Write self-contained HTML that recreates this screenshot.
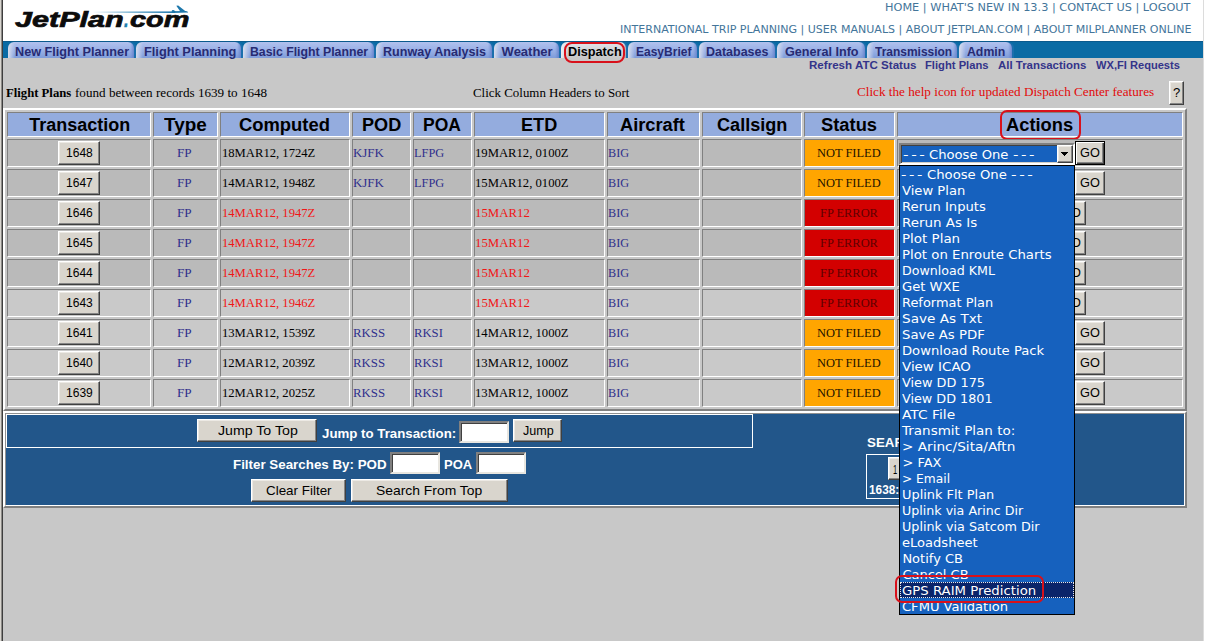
<!DOCTYPE html>
<html lang="en"><head><meta charset="utf-8"><title>JetPlan.com - Dispatch</title>
<style>
html,body{margin:0;padding:0}body{width:1205px;height:644px;overflow:hidden;background:#fff;position:relative}
.b{position:absolute;box-sizing:border-box}
.t{position:absolute;white-space:pre;line-height:1.2;transform-origin:0 0}

.cell{border:1px solid;border-color:#808080 #fff #fff #808080}
.btn{background:#d9d5cd;border:1px solid;border-color:#fff #404040 #404040 #fff;box-shadow:inset -1px -1px 0 #858585, inset 1px 1px 0 #ece9e4}
.btnd{background:#d9d5cd;border:1px solid #000;box-shadow:inset 1px 1px 0 #fff, inset -1px -1px 0 #404040, inset -2px -2px 0 #858585}
.inp{background:#fff;border:2px solid;border-color:#808080 #e8e6e0 #e8e6e0 #808080;box-shadow:inset 1px 1px 0 #404040}
.tab{border-radius:6px 6px 0 0;background:linear-gradient(90deg,rgba(218,223,236,.95) 0,rgba(218,223,236,.7) 2px,rgba(218,223,236,0) 7px),linear-gradient(270deg,rgba(95,125,200,.8) 0,rgba(95,125,200,.35) 2px,rgba(95,125,200,0) 4px),linear-gradient(#b1c1ee 0%,#9cb2e7 45%,#7f9dda 100%);box-shadow:2px 0 0 #1b6fad}
.tabsel{border-radius:6px 6px 0 0;background:linear-gradient(90deg,rgba(240,241,245,.95) 0,rgba(240,241,245,0) 6px),linear-gradient(270deg,rgba(120,130,160,.5) 0,rgba(120,130,160,0) 3px),linear-gradient(#e2e4ec 0%,#d3d4d9 50%,#c8c8c8 100%);box-shadow:2px 0 0 #1b6fad}
.ann{border:2px solid #d8111b;border-radius:7px;background:transparent}
</style></head>
<body>
<div class="b" style="left:0px;top:0px;width:1205px;height:644px;background:#fff;"></div>
<div class="b" style="left:3px;top:0px;width:1200px;height:641px;background:#c8c8c8;"></div>
<div class="b" style="left:1203px;top:0px;width:1px;height:641px;background:#dcdcdc;"></div>
<div class="b" style="left:3px;top:0px;width:1200px;height:41px;background:#fff;"></div>
<div class="b" style="left:0px;top:0px;width:1px;height:641px;background:#d8d5cf;"></div>
<div class="b" style="left:1px;top:0px;width:1px;height:641px;background:#8c8a87;"></div>
<div class="b" style="left:2px;top:0px;width:1px;height:641px;background:#3e3e3e;"></div>
<div class="b" style="left:3px;top:41px;width:1200px;height:17px;background:#0a6ba4;border-top:1px solid #0a5a8d;"></div>
<span class="t" style="left:15.00px;top:6.50px;font-family:'Liberation Sans', Arial, sans-serif;font-size:21.6px;color:#0c0c0c;font-weight:bold;font-style:italic;-webkit-text-stroke:0.7px #0c0c0c;transform:scaleX(1.4145);">JetPlan</span>
<span class="t" style="left:124.20px;top:6.50px;font-family:'Liberation Sans', Arial, sans-serif;font-size:21.6px;color:#1c7fb0;font-weight:bold;font-style:italic;-webkit-text-stroke:0.5px #1c7fb0;transform:scaleX(0.7600);">.</span>
<span class="t" style="left:130.20px;top:6.50px;font-family:'Liberation Sans', Arial, sans-serif;font-size:21.6px;color:#0c0c0c;font-weight:bold;font-style:italic;-webkit-text-stroke:0.7px #0c0c0c;transform:scaleX(1.3364);">com</span>
<svg class="b" style="left:90px;top:2px;width:104px;height:14px" viewBox="0 0 104 14"><defs><linearGradient id="lg" x1="0" x2="1"><stop offset="0" stop-color="#2a86b8" stop-opacity="0"/><stop offset="0.45" stop-color="#2a86b8" stop-opacity=".55"/><stop offset="1" stop-color="#1d77ab"/></linearGradient></defs><rect x="3" y="9.4" width="82" height="1.6" fill="url(#lg)"/><path d="M81.5 9.2 L96 9.0 Q98.5 9.8 98.2 10.6 L82 11.0 Z M86.3 3.8 L88.2 3.6 L95.5 9.3 L90.3 9.5 Z M81.7 8.3 L83.5 8.1 L85.5 9.3 L82.5 9.4 Z" fill="#1d77ab"/></svg>
<span class="t" style="left:884.83px;top:1.90px;font-family:'DejaVu Sans', Verdana, sans-serif;font-size:9.7px;color:#43759a;transform:scaleX(1.1655);">HOME | WHAT&#x27;S NEW IN 13.3 | CONTACT US | LOGOUT</span>
<span class="t" style="left:619.86px;top:23.80px;font-family:'DejaVu Sans', Verdana, sans-serif;font-size:9.7px;color:#43759a;transform:scaleX(1.1392);">INTERNATIONAL TRIP PLANNING | USER MANUALS | ABOUT JETPLAN.COM | ABOUT MILPLANNER ONLINE</span>
<div class="b tab" style="left:8px;top:42px;width:126px;height:16px"></div>
<span class="t" style="left:14.72px;top:43.50px;font-family:'Liberation Sans', Arial, sans-serif;font-size:13px;color:#272b72;font-weight:bold;transform:scaleX(0.9750);">New Flight Planner</span>
<div class="b tab" style="left:136px;top:42px;width:105px;height:16px"></div>
<span class="t" style="left:143.52px;top:43.50px;font-family:'Liberation Sans', Arial, sans-serif;font-size:13px;color:#272b72;font-weight:bold;transform:scaleX(0.9837);">Flight Planning</span>
<div class="b tab" style="left:243px;top:42px;width:131px;height:16px"></div>
<span class="t" style="left:249.76px;top:43.50px;font-family:'Liberation Sans', Arial, sans-serif;font-size:13px;color:#272b72;font-weight:bold;transform:scaleX(0.9444);">Basic Flight Planner</span>
<div class="b tab" style="left:376px;top:42px;width:116px;height:16px"></div>
<span class="t" style="left:383.33px;top:43.50px;font-family:'Liberation Sans', Arial, sans-serif;font-size:13px;color:#272b72;font-weight:bold;transform:scaleX(0.9667);">Runway Analysis</span>
<div class="b tab" style="left:494px;top:42px;width:65px;height:16px"></div>
<span class="t" style="left:501.60px;top:43.50px;font-family:'Liberation Sans', Arial, sans-serif;font-size:13px;color:#272b72;font-weight:bold;">Weather</span>
<div class="b tabsel" style="left:561px;top:42px;width:65px;height:16px"></div>
<span class="t" style="left:567.72px;top:43.50px;font-family:'Liberation Sans', Arial, sans-serif;font-size:13px;color:#000;font-weight:bold;transform:scaleX(0.9774);">Dispatch</span>
<div class="b tab" style="left:628px;top:42px;width:69px;height:16px"></div>
<span class="t" style="left:635.58px;top:43.50px;font-family:'Liberation Sans', Arial, sans-serif;font-size:13px;color:#272b72;font-weight:bold;transform:scaleX(0.9237);">EasyBrief</span>
<div class="b tab" style="left:699px;top:42px;width:76px;height:16px"></div>
<span class="t" style="left:706.04px;top:43.50px;font-family:'Liberation Sans', Arial, sans-serif;font-size:13px;color:#272b72;font-weight:bold;transform:scaleX(0.9594);">Databases</span>
<div class="b tab" style="left:777px;top:42px;width:88px;height:16px"></div>
<span class="t" style="left:784.60px;top:43.50px;font-family:'Liberation Sans', Arial, sans-serif;font-size:13px;color:#272b72;font-weight:bold;transform:scaleX(0.9697);">General Info</span>
<div class="b tab" style="left:867px;top:42px;width:90px;height:16px"></div>
<span class="t" style="left:874.60px;top:43.50px;font-family:'Liberation Sans', Arial, sans-serif;font-size:13px;color:#272b72;font-weight:bold;transform:scaleX(0.9205);">Transmission</span>
<div class="b tab" style="left:959px;top:42px;width:53px;height:16px"></div>
<span class="t" style="left:967.30px;top:43.50px;font-family:'Liberation Sans', Arial, sans-serif;font-size:13px;color:#272b72;font-weight:bold;transform:scaleX(0.9450);">Admin</span>
<div class="b ann" style="left:564px;top:42px;width:61px;height:21px;border-radius:8px"></div>
<span class="t" style="left:808.95px;top:59.00px;font-family:'Liberation Sans', Arial, sans-serif;font-size:11px;color:#34348a;font-weight:bold;transform:scaleX(1.0525);">Refresh ATC Status</span>
<span class="t" style="left:925.48px;top:59.00px;font-family:'Liberation Sans', Arial, sans-serif;font-size:11px;color:#34348a;font-weight:bold;transform:scaleX(1.0197);">Flight Plans</span>
<span class="t" style="left:998.40px;top:59.00px;font-family:'Liberation Sans', Arial, sans-serif;font-size:11px;color:#34348a;font-weight:bold;transform:scaleX(1.0388);">All Transactions</span>
<span class="t" style="left:1096.40px;top:59.00px;font-family:'Liberation Sans', Arial, sans-serif;font-size:11px;color:#34348a;font-weight:bold;transform:scaleX(1.0096);">WX,FI Requests</span>
<span class="t" style="left:6.00px;top:84.50px;font-family:'Liberation Serif', 'Times New Roman', serif;font-size:13px;color:#000;font-weight:bold;transform:scaleX(0.9761);">Flight Plans</span>
<span class="t" style="left:74.69px;top:84.50px;font-family:'Liberation Serif', 'Times New Roman', serif;font-size:13px;color:#000;transform:scaleX(1.0101);">found between records 1639 to 1648</span>
<span class="t" style="left:473.20px;top:84.50px;font-family:'Liberation Serif', 'Times New Roman', serif;font-size:13px;color:#000;transform:scaleX(0.9936);">Click Column Headers to Sort</span>
<span class="t" style="left:857.00px;top:84.30px;font-family:'Liberation Serif', 'Times New Roman', serif;font-size:13px;color:#e20a0a;transform:scaleX(1.0137);">Click the help icon for updated Dispatch Center features</span>
<div class="b btn" style="left:1169px;top:81px;width:15px;height:24px"></div>
<span class="t" style="left:1172.63px;top:84.80px;font-family:'Liberation Sans', Arial, sans-serif;font-size:13.5px;color:#000;transform:scaleX(0.9667);">?</span>
<div class="b" style="left:3px;top:108px;width:1184px;height:303px;border:2px solid;border-color:#fff #808080 #808080 #fff;"></div>
<div class="b cell" style="left:7px;top:112px;width:144px;height:25px;background:#94acde"></div>
<span class="t" style="left:29.20px;top:114.70px;font-family:'Liberation Sans', Arial, sans-serif;font-size:18px;color:#000;font-weight:bold;">Transaction</span>
<div class="b cell" style="left:153px;top:112px;width:65px;height:25px;background:#94acde"></div>
<span class="t" style="left:164.00px;top:114.70px;font-family:'Liberation Sans', Arial, sans-serif;font-size:18px;color:#000;font-weight:bold;transform:scaleX(1.0500);">Type</span>
<div class="b cell" style="left:220px;top:112px;width:130px;height:25px;background:#94acde"></div>
<span class="t" style="left:238.68px;top:114.70px;font-family:'Liberation Sans', Arial, sans-serif;font-size:18px;color:#000;font-weight:bold;transform:scaleX(1.0218);">Computed</span>
<div class="b cell" style="left:352px;top:112px;width:59px;height:25px;background:#94acde"></div>
<span class="t" style="left:362.19px;top:114.70px;font-family:'Liberation Sans', Arial, sans-serif;font-size:18px;color:#000;font-weight:bold;transform:scaleX(1.0054);">POD</span>
<div class="b cell" style="left:413px;top:112px;width:59px;height:25px;background:#94acde"></div>
<span class="t" style="left:422.93px;top:114.70px;font-family:'Liberation Sans', Arial, sans-serif;font-size:18px;color:#000;font-weight:bold;transform:scaleX(0.9711);">POA</span>
<div class="b cell" style="left:474px;top:112px;width:131px;height:25px;background:#94acde"></div>
<span class="t" style="left:520.99px;top:114.70px;font-family:'Liberation Sans', Arial, sans-serif;font-size:18px;color:#000;font-weight:bold;transform:scaleX(1.0059);">ETD</span>
<div class="b cell" style="left:607px;top:112px;width:93px;height:25px;background:#94acde"></div>
<span class="t" style="left:620.39px;top:114.70px;font-family:'Liberation Sans', Arial, sans-serif;font-size:18px;color:#000;font-weight:bold;transform:scaleX(1.0143);">Aircraft</span>
<div class="b cell" style="left:702px;top:112px;width:100px;height:25px;background:#94acde"></div>
<span class="t" style="left:716.89px;top:114.70px;font-family:'Liberation Sans', Arial, sans-serif;font-size:18px;color:#000;font-weight:bold;transform:scaleX(1.0059);">Callsign</span>
<div class="b cell" style="left:804px;top:112px;width:91px;height:25px;background:#94acde"></div>
<span class="t" style="left:821.28px;top:114.70px;font-family:'Liberation Sans', Arial, sans-serif;font-size:18px;color:#000;font-weight:bold;transform:scaleX(1.0189);">Status</span>
<div class="b cell" style="left:897px;top:112px;width:286px;height:25px;background:#94acde"></div>
<span class="t" style="left:1006.48px;top:114.70px;font-family:'Liberation Sans', Arial, sans-serif;font-size:18px;color:#000;font-weight:bold;transform:scaleX(1.0172);">Actions</span>
<div class="b ann" style="left:1000px;top:110px;width:81px;height:30px"></div>
<div class="b cell" style="left:7px;top:139px;width:144px;height:28px;background:#bababa"></div>
<div class="b cell" style="left:153px;top:139px;width:65px;height:28px;background:#bababa"></div>
<div class="b cell" style="left:220px;top:139px;width:130px;height:28px;background:#bababa"></div>
<div class="b cell" style="left:352px;top:139px;width:59px;height:28px;background:#bababa"></div>
<div class="b cell" style="left:413px;top:139px;width:59px;height:28px;background:#bababa"></div>
<div class="b cell" style="left:474px;top:139px;width:131px;height:28px;background:#bababa"></div>
<div class="b cell" style="left:607px;top:139px;width:93px;height:28px;background:#bababa"></div>
<div class="b cell" style="left:702px;top:139px;width:100px;height:28px;background:#bababa"></div>
<div class="b cell" style="left:804px;top:139px;width:91px;height:28px;background:#ffa500"></div>
<div class="b cell" style="left:897px;top:139px;width:286px;height:28px;background:#bababa"></div>
<div class="b btn" style="left:58px;top:141px;width:42px;height:24px"></div>
<span class="t" style="left:65.67px;top:145.20px;font-family:'Liberation Sans', Arial, sans-serif;font-size:13px;color:#000;transform:scaleX(0.9250);">1648</span>
<span class="t" style="left:177.38px;top:145.00px;font-family:'Liberation Serif', 'Times New Roman', serif;font-size:13px;color:#2f2f8c;transform:scaleX(1.0154);">FP</span>
<span class="t" style="left:221.76px;top:145.00px;font-family:'Liberation Serif', 'Times New Roman', serif;font-size:13px;color:#000;transform:scaleX(0.9710);">18MAR12, 1724Z</span>
<span class="t" style="left:352.90px;top:145.00px;font-family:'Liberation Serif', 'Times New Roman', serif;font-size:13px;color:#2f2f8c;">KJFK</span>
<span class="t" style="left:414.35px;top:145.00px;font-family:'Liberation Serif', 'Times New Roman', serif;font-size:13px;color:#2f2f8c;transform:scaleX(0.9500);">LFPG</span>
<span class="t" style="left:475.25px;top:145.00px;font-family:'Liberation Serif', 'Times New Roman', serif;font-size:13px;color:#000;transform:scaleX(0.9742);">19MAR12, 0100Z</span>
<span class="t" style="left:608.26px;top:145.00px;font-family:'Liberation Serif', 'Times New Roman', serif;font-size:13px;color:#2f2f8c;transform:scaleX(0.9381);">BIG</span>
<span class="t" style="left:817.24px;top:145.00px;font-family:'Liberation Serif', 'Times New Roman', serif;font-size:13px;color:#1c1200;transform:scaleX(0.9569);">NOT FILED</span>
<div class="b cell" style="left:7px;top:169px;width:144px;height:28px;background:#bababa"></div>
<div class="b cell" style="left:153px;top:169px;width:65px;height:28px;background:#bababa"></div>
<div class="b cell" style="left:220px;top:169px;width:130px;height:28px;background:#bababa"></div>
<div class="b cell" style="left:352px;top:169px;width:59px;height:28px;background:#bababa"></div>
<div class="b cell" style="left:413px;top:169px;width:59px;height:28px;background:#bababa"></div>
<div class="b cell" style="left:474px;top:169px;width:131px;height:28px;background:#bababa"></div>
<div class="b cell" style="left:607px;top:169px;width:93px;height:28px;background:#bababa"></div>
<div class="b cell" style="left:702px;top:169px;width:100px;height:28px;background:#bababa"></div>
<div class="b cell" style="left:804px;top:169px;width:91px;height:28px;background:#ffa500"></div>
<div class="b cell" style="left:897px;top:169px;width:286px;height:28px;background:#bababa"></div>
<div class="b btn" style="left:58px;top:171px;width:42px;height:24px"></div>
<span class="t" style="left:65.67px;top:175.20px;font-family:'Liberation Sans', Arial, sans-serif;font-size:13px;color:#000;transform:scaleX(0.9250);">1647</span>
<span class="t" style="left:177.38px;top:175.00px;font-family:'Liberation Serif', 'Times New Roman', serif;font-size:13px;color:#2f2f8c;transform:scaleX(1.0154);">FP</span>
<span class="t" style="left:221.76px;top:175.00px;font-family:'Liberation Serif', 'Times New Roman', serif;font-size:13px;color:#000;transform:scaleX(0.9710);">14MAR12, 1948Z</span>
<span class="t" style="left:352.90px;top:175.00px;font-family:'Liberation Serif', 'Times New Roman', serif;font-size:13px;color:#2f2f8c;">KJFK</span>
<span class="t" style="left:414.35px;top:175.00px;font-family:'Liberation Serif', 'Times New Roman', serif;font-size:13px;color:#2f2f8c;transform:scaleX(0.9500);">LFPG</span>
<span class="t" style="left:475.25px;top:175.00px;font-family:'Liberation Serif', 'Times New Roman', serif;font-size:13px;color:#000;transform:scaleX(0.9742);">15MAR12, 0100Z</span>
<span class="t" style="left:608.26px;top:175.00px;font-family:'Liberation Serif', 'Times New Roman', serif;font-size:13px;color:#2f2f8c;transform:scaleX(0.9381);">BIG</span>
<span class="t" style="left:817.24px;top:175.00px;font-family:'Liberation Serif', 'Times New Roman', serif;font-size:13px;color:#1c1200;transform:scaleX(0.9569);">NOT FILED</span>
<div class="b inp" style="left:899px;top:173px;width:176px;height:22px"></div>
<div class="b btn" style="left:1075px;top:171px;width:30px;height:24px"></div>
<span class="t" style="left:1079.72px;top:174.70px;font-family:'Liberation Sans', Arial, sans-serif;font-size:13px;color:#000;transform:scaleX(0.9789);">GO</span>
<div class="b cell" style="left:7px;top:199px;width:144px;height:28px;background:#bababa"></div>
<div class="b cell" style="left:153px;top:199px;width:65px;height:28px;background:#bababa"></div>
<div class="b cell" style="left:220px;top:199px;width:130px;height:28px;background:#bababa"></div>
<div class="b cell" style="left:352px;top:199px;width:59px;height:28px;background:#bababa"></div>
<div class="b cell" style="left:413px;top:199px;width:59px;height:28px;background:#bababa"></div>
<div class="b cell" style="left:474px;top:199px;width:131px;height:28px;background:#bababa"></div>
<div class="b cell" style="left:607px;top:199px;width:93px;height:28px;background:#bababa"></div>
<div class="b cell" style="left:702px;top:199px;width:100px;height:28px;background:#bababa"></div>
<div class="b cell" style="left:804px;top:199px;width:91px;height:28px;background:#d30000"></div>
<div class="b cell" style="left:897px;top:199px;width:286px;height:28px;background:#bababa"></div>
<div class="b btn" style="left:58px;top:201px;width:42px;height:24px"></div>
<span class="t" style="left:65.67px;top:205.20px;font-family:'Liberation Sans', Arial, sans-serif;font-size:13px;color:#000;transform:scaleX(0.9250);">1646</span>
<span class="t" style="left:177.38px;top:205.00px;font-family:'Liberation Serif', 'Times New Roman', serif;font-size:13px;color:#2f2f8c;transform:scaleX(1.0154);">FP</span>
<span class="t" style="left:221.76px;top:205.00px;font-family:'Liberation Serif', 'Times New Roman', serif;font-size:13px;color:#f01616;transform:scaleX(0.9710);">14MAR12, 1947Z</span>
<span class="t" style="left:475.23px;top:205.00px;font-family:'Liberation Serif', 'Times New Roman', serif;font-size:13px;color:#f01616;transform:scaleX(0.9868);">15MAR12</span>
<span class="t" style="left:608.26px;top:205.00px;font-family:'Liberation Serif', 'Times New Roman', serif;font-size:13px;color:#2f2f8c;transform:scaleX(0.9381);">BIG</span>
<span class="t" style="left:820.24px;top:205.00px;font-family:'Liberation Serif', 'Times New Roman', serif;font-size:13px;color:#5e0000;transform:scaleX(0.9559);">FP ERROR</span>
<div class="b inp" style="left:899px;top:203px;width:157px;height:22px"></div>
<div class="b btn" style="left:1056px;top:201px;width:30px;height:24px"></div>
<span class="t" style="left:1060.72px;top:204.70px;font-family:'Liberation Sans', Arial, sans-serif;font-size:13px;color:#000;transform:scaleX(0.9789);">GO</span>
<div class="b cell" style="left:7px;top:229px;width:144px;height:28px;background:#bababa"></div>
<div class="b cell" style="left:153px;top:229px;width:65px;height:28px;background:#bababa"></div>
<div class="b cell" style="left:220px;top:229px;width:130px;height:28px;background:#bababa"></div>
<div class="b cell" style="left:352px;top:229px;width:59px;height:28px;background:#bababa"></div>
<div class="b cell" style="left:413px;top:229px;width:59px;height:28px;background:#bababa"></div>
<div class="b cell" style="left:474px;top:229px;width:131px;height:28px;background:#bababa"></div>
<div class="b cell" style="left:607px;top:229px;width:93px;height:28px;background:#bababa"></div>
<div class="b cell" style="left:702px;top:229px;width:100px;height:28px;background:#bababa"></div>
<div class="b cell" style="left:804px;top:229px;width:91px;height:28px;background:#d30000"></div>
<div class="b cell" style="left:897px;top:229px;width:286px;height:28px;background:#bababa"></div>
<div class="b btn" style="left:58px;top:231px;width:42px;height:24px"></div>
<span class="t" style="left:65.67px;top:235.20px;font-family:'Liberation Sans', Arial, sans-serif;font-size:13px;color:#000;transform:scaleX(0.9250);">1645</span>
<span class="t" style="left:177.38px;top:235.00px;font-family:'Liberation Serif', 'Times New Roman', serif;font-size:13px;color:#2f2f8c;transform:scaleX(1.0154);">FP</span>
<span class="t" style="left:221.76px;top:235.00px;font-family:'Liberation Serif', 'Times New Roman', serif;font-size:13px;color:#f01616;transform:scaleX(0.9710);">14MAR12, 1947Z</span>
<span class="t" style="left:475.23px;top:235.00px;font-family:'Liberation Serif', 'Times New Roman', serif;font-size:13px;color:#f01616;transform:scaleX(0.9868);">15MAR12</span>
<span class="t" style="left:608.26px;top:235.00px;font-family:'Liberation Serif', 'Times New Roman', serif;font-size:13px;color:#2f2f8c;transform:scaleX(0.9381);">BIG</span>
<span class="t" style="left:820.24px;top:235.00px;font-family:'Liberation Serif', 'Times New Roman', serif;font-size:13px;color:#5e0000;transform:scaleX(0.9559);">FP ERROR</span>
<div class="b inp" style="left:899px;top:233px;width:157px;height:22px"></div>
<div class="b btn" style="left:1056px;top:231px;width:30px;height:24px"></div>
<span class="t" style="left:1060.72px;top:234.70px;font-family:'Liberation Sans', Arial, sans-serif;font-size:13px;color:#000;transform:scaleX(0.9789);">GO</span>
<div class="b cell" style="left:7px;top:259px;width:144px;height:28px;background:#bababa"></div>
<div class="b cell" style="left:153px;top:259px;width:65px;height:28px;background:#bababa"></div>
<div class="b cell" style="left:220px;top:259px;width:130px;height:28px;background:#bababa"></div>
<div class="b cell" style="left:352px;top:259px;width:59px;height:28px;background:#bababa"></div>
<div class="b cell" style="left:413px;top:259px;width:59px;height:28px;background:#bababa"></div>
<div class="b cell" style="left:474px;top:259px;width:131px;height:28px;background:#bababa"></div>
<div class="b cell" style="left:607px;top:259px;width:93px;height:28px;background:#bababa"></div>
<div class="b cell" style="left:702px;top:259px;width:100px;height:28px;background:#bababa"></div>
<div class="b cell" style="left:804px;top:259px;width:91px;height:28px;background:#d30000"></div>
<div class="b cell" style="left:897px;top:259px;width:286px;height:28px;background:#bababa"></div>
<div class="b btn" style="left:58px;top:261px;width:42px;height:24px"></div>
<span class="t" style="left:65.67px;top:265.20px;font-family:'Liberation Sans', Arial, sans-serif;font-size:13px;color:#000;transform:scaleX(0.9250);">1644</span>
<span class="t" style="left:177.38px;top:265.00px;font-family:'Liberation Serif', 'Times New Roman', serif;font-size:13px;color:#2f2f8c;transform:scaleX(1.0154);">FP</span>
<span class="t" style="left:221.76px;top:265.00px;font-family:'Liberation Serif', 'Times New Roman', serif;font-size:13px;color:#f01616;transform:scaleX(0.9710);">14MAR12, 1947Z</span>
<span class="t" style="left:475.23px;top:265.00px;font-family:'Liberation Serif', 'Times New Roman', serif;font-size:13px;color:#f01616;transform:scaleX(0.9868);">15MAR12</span>
<span class="t" style="left:608.26px;top:265.00px;font-family:'Liberation Serif', 'Times New Roman', serif;font-size:13px;color:#2f2f8c;transform:scaleX(0.9381);">BIG</span>
<span class="t" style="left:820.24px;top:265.00px;font-family:'Liberation Serif', 'Times New Roman', serif;font-size:13px;color:#5e0000;transform:scaleX(0.9559);">FP ERROR</span>
<div class="b inp" style="left:899px;top:263px;width:157px;height:22px"></div>
<div class="b btn" style="left:1056px;top:261px;width:30px;height:24px"></div>
<span class="t" style="left:1060.72px;top:264.70px;font-family:'Liberation Sans', Arial, sans-serif;font-size:13px;color:#000;transform:scaleX(0.9789);">GO</span>
<div class="b cell" style="left:7px;top:289px;width:144px;height:28px;background:#c9c9c9"></div>
<div class="b cell" style="left:153px;top:289px;width:65px;height:28px;background:#c9c9c9"></div>
<div class="b cell" style="left:220px;top:289px;width:130px;height:28px;background:#c9c9c9"></div>
<div class="b cell" style="left:352px;top:289px;width:59px;height:28px;background:#c9c9c9"></div>
<div class="b cell" style="left:413px;top:289px;width:59px;height:28px;background:#c9c9c9"></div>
<div class="b cell" style="left:474px;top:289px;width:131px;height:28px;background:#c9c9c9"></div>
<div class="b cell" style="left:607px;top:289px;width:93px;height:28px;background:#c9c9c9"></div>
<div class="b cell" style="left:702px;top:289px;width:100px;height:28px;background:#c9c9c9"></div>
<div class="b cell" style="left:804px;top:289px;width:91px;height:28px;background:#d30000"></div>
<div class="b cell" style="left:897px;top:289px;width:286px;height:28px;background:#c9c9c9"></div>
<div class="b btn" style="left:58px;top:291px;width:42px;height:24px"></div>
<span class="t" style="left:65.67px;top:295.20px;font-family:'Liberation Sans', Arial, sans-serif;font-size:13px;color:#000;transform:scaleX(0.9250);">1643</span>
<span class="t" style="left:177.38px;top:295.00px;font-family:'Liberation Serif', 'Times New Roman', serif;font-size:13px;color:#2f2f8c;transform:scaleX(1.0154);">FP</span>
<span class="t" style="left:221.76px;top:295.00px;font-family:'Liberation Serif', 'Times New Roman', serif;font-size:13px;color:#f01616;transform:scaleX(0.9710);">14MAR12, 1946Z</span>
<span class="t" style="left:475.23px;top:295.00px;font-family:'Liberation Serif', 'Times New Roman', serif;font-size:13px;color:#f01616;transform:scaleX(0.9868);">15MAR12</span>
<span class="t" style="left:608.26px;top:295.00px;font-family:'Liberation Serif', 'Times New Roman', serif;font-size:13px;color:#2f2f8c;transform:scaleX(0.9381);">BIG</span>
<span class="t" style="left:820.24px;top:295.00px;font-family:'Liberation Serif', 'Times New Roman', serif;font-size:13px;color:#5e0000;transform:scaleX(0.9559);">FP ERROR</span>
<div class="b inp" style="left:899px;top:293px;width:157px;height:22px"></div>
<div class="b btn" style="left:1056px;top:291px;width:30px;height:24px"></div>
<span class="t" style="left:1060.72px;top:294.70px;font-family:'Liberation Sans', Arial, sans-serif;font-size:13px;color:#000;transform:scaleX(0.9789);">GO</span>
<div class="b cell" style="left:7px;top:319px;width:144px;height:28px;background:#c9c9c9"></div>
<div class="b cell" style="left:153px;top:319px;width:65px;height:28px;background:#c9c9c9"></div>
<div class="b cell" style="left:220px;top:319px;width:130px;height:28px;background:#c9c9c9"></div>
<div class="b cell" style="left:352px;top:319px;width:59px;height:28px;background:#c9c9c9"></div>
<div class="b cell" style="left:413px;top:319px;width:59px;height:28px;background:#c9c9c9"></div>
<div class="b cell" style="left:474px;top:319px;width:131px;height:28px;background:#c9c9c9"></div>
<div class="b cell" style="left:607px;top:319px;width:93px;height:28px;background:#c9c9c9"></div>
<div class="b cell" style="left:702px;top:319px;width:100px;height:28px;background:#c9c9c9"></div>
<div class="b cell" style="left:804px;top:319px;width:91px;height:28px;background:#ffa500"></div>
<div class="b cell" style="left:897px;top:319px;width:286px;height:28px;background:#c9c9c9"></div>
<div class="b btn" style="left:58px;top:321px;width:42px;height:24px"></div>
<span class="t" style="left:65.67px;top:325.20px;font-family:'Liberation Sans', Arial, sans-serif;font-size:13px;color:#000;transform:scaleX(0.9250);">1641</span>
<span class="t" style="left:177.38px;top:325.00px;font-family:'Liberation Serif', 'Times New Roman', serif;font-size:13px;color:#2f2f8c;transform:scaleX(1.0154);">FP</span>
<span class="t" style="left:221.76px;top:325.00px;font-family:'Liberation Serif', 'Times New Roman', serif;font-size:13px;color:#000;transform:scaleX(0.9710);">13MAR12, 1539Z</span>
<span class="t" style="left:352.91px;top:325.00px;font-family:'Liberation Serif', 'Times New Roman', serif;font-size:13px;color:#2f2f8c;transform:scaleX(0.9871);">RKSS</span>
<span class="t" style="left:414.32px;top:325.00px;font-family:'Liberation Serif', 'Times New Roman', serif;font-size:13px;color:#2f2f8c;transform:scaleX(0.9750);">RKSI</span>
<span class="t" style="left:475.25px;top:325.00px;font-family:'Liberation Serif', 'Times New Roman', serif;font-size:13px;color:#000;transform:scaleX(0.9742);">14MAR12, 1000Z</span>
<span class="t" style="left:608.26px;top:325.00px;font-family:'Liberation Serif', 'Times New Roman', serif;font-size:13px;color:#2f2f8c;transform:scaleX(0.9381);">BIG</span>
<span class="t" style="left:817.24px;top:325.00px;font-family:'Liberation Serif', 'Times New Roman', serif;font-size:13px;color:#1c1200;transform:scaleX(0.9569);">NOT FILED</span>
<div class="b inp" style="left:899px;top:323px;width:176px;height:22px"></div>
<div class="b btn" style="left:1075px;top:321px;width:30px;height:24px"></div>
<span class="t" style="left:1079.72px;top:324.70px;font-family:'Liberation Sans', Arial, sans-serif;font-size:13px;color:#000;transform:scaleX(0.9789);">GO</span>
<div class="b cell" style="left:7px;top:349px;width:144px;height:28px;background:#c9c9c9"></div>
<div class="b cell" style="left:153px;top:349px;width:65px;height:28px;background:#c9c9c9"></div>
<div class="b cell" style="left:220px;top:349px;width:130px;height:28px;background:#c9c9c9"></div>
<div class="b cell" style="left:352px;top:349px;width:59px;height:28px;background:#c9c9c9"></div>
<div class="b cell" style="left:413px;top:349px;width:59px;height:28px;background:#c9c9c9"></div>
<div class="b cell" style="left:474px;top:349px;width:131px;height:28px;background:#c9c9c9"></div>
<div class="b cell" style="left:607px;top:349px;width:93px;height:28px;background:#c9c9c9"></div>
<div class="b cell" style="left:702px;top:349px;width:100px;height:28px;background:#c9c9c9"></div>
<div class="b cell" style="left:804px;top:349px;width:91px;height:28px;background:#ffa500"></div>
<div class="b cell" style="left:897px;top:349px;width:286px;height:28px;background:#c9c9c9"></div>
<div class="b btn" style="left:58px;top:351px;width:42px;height:24px"></div>
<span class="t" style="left:65.67px;top:355.20px;font-family:'Liberation Sans', Arial, sans-serif;font-size:13px;color:#000;transform:scaleX(0.9250);">1640</span>
<span class="t" style="left:177.38px;top:355.00px;font-family:'Liberation Serif', 'Times New Roman', serif;font-size:13px;color:#2f2f8c;transform:scaleX(1.0154);">FP</span>
<span class="t" style="left:221.76px;top:355.00px;font-family:'Liberation Serif', 'Times New Roman', serif;font-size:13px;color:#000;transform:scaleX(0.9710);">12MAR12, 2039Z</span>
<span class="t" style="left:352.91px;top:355.00px;font-family:'Liberation Serif', 'Times New Roman', serif;font-size:13px;color:#2f2f8c;transform:scaleX(0.9871);">RKSS</span>
<span class="t" style="left:414.32px;top:355.00px;font-family:'Liberation Serif', 'Times New Roman', serif;font-size:13px;color:#2f2f8c;transform:scaleX(0.9750);">RKSI</span>
<span class="t" style="left:475.25px;top:355.00px;font-family:'Liberation Serif', 'Times New Roman', serif;font-size:13px;color:#000;transform:scaleX(0.9742);">13MAR12, 1000Z</span>
<span class="t" style="left:608.26px;top:355.00px;font-family:'Liberation Serif', 'Times New Roman', serif;font-size:13px;color:#2f2f8c;transform:scaleX(0.9381);">BIG</span>
<span class="t" style="left:817.24px;top:355.00px;font-family:'Liberation Serif', 'Times New Roman', serif;font-size:13px;color:#1c1200;transform:scaleX(0.9569);">NOT FILED</span>
<div class="b inp" style="left:899px;top:353px;width:176px;height:22px"></div>
<div class="b btn" style="left:1075px;top:351px;width:30px;height:24px"></div>
<span class="t" style="left:1079.72px;top:354.70px;font-family:'Liberation Sans', Arial, sans-serif;font-size:13px;color:#000;transform:scaleX(0.9789);">GO</span>
<div class="b cell" style="left:7px;top:379px;width:144px;height:28px;background:#c9c9c9"></div>
<div class="b cell" style="left:153px;top:379px;width:65px;height:28px;background:#c9c9c9"></div>
<div class="b cell" style="left:220px;top:379px;width:130px;height:28px;background:#c9c9c9"></div>
<div class="b cell" style="left:352px;top:379px;width:59px;height:28px;background:#c9c9c9"></div>
<div class="b cell" style="left:413px;top:379px;width:59px;height:28px;background:#c9c9c9"></div>
<div class="b cell" style="left:474px;top:379px;width:131px;height:28px;background:#c9c9c9"></div>
<div class="b cell" style="left:607px;top:379px;width:93px;height:28px;background:#c9c9c9"></div>
<div class="b cell" style="left:702px;top:379px;width:100px;height:28px;background:#c9c9c9"></div>
<div class="b cell" style="left:804px;top:379px;width:91px;height:28px;background:#ffa500"></div>
<div class="b cell" style="left:897px;top:379px;width:286px;height:28px;background:#c9c9c9"></div>
<div class="b btn" style="left:58px;top:381px;width:42px;height:24px"></div>
<span class="t" style="left:65.67px;top:385.20px;font-family:'Liberation Sans', Arial, sans-serif;font-size:13px;color:#000;transform:scaleX(0.9250);">1639</span>
<span class="t" style="left:177.38px;top:385.00px;font-family:'Liberation Serif', 'Times New Roman', serif;font-size:13px;color:#2f2f8c;transform:scaleX(1.0154);">FP</span>
<span class="t" style="left:221.76px;top:385.00px;font-family:'Liberation Serif', 'Times New Roman', serif;font-size:13px;color:#000;transform:scaleX(0.9710);">12MAR12, 2025Z</span>
<span class="t" style="left:352.91px;top:385.00px;font-family:'Liberation Serif', 'Times New Roman', serif;font-size:13px;color:#2f2f8c;transform:scaleX(0.9871);">RKSS</span>
<span class="t" style="left:414.32px;top:385.00px;font-family:'Liberation Serif', 'Times New Roman', serif;font-size:13px;color:#2f2f8c;transform:scaleX(0.9750);">RKSI</span>
<span class="t" style="left:475.25px;top:385.00px;font-family:'Liberation Serif', 'Times New Roman', serif;font-size:13px;color:#000;transform:scaleX(0.9742);">13MAR12, 1000Z</span>
<span class="t" style="left:608.26px;top:385.00px;font-family:'Liberation Serif', 'Times New Roman', serif;font-size:13px;color:#2f2f8c;transform:scaleX(0.9381);">BIG</span>
<span class="t" style="left:817.24px;top:385.00px;font-family:'Liberation Serif', 'Times New Roman', serif;font-size:13px;color:#1c1200;transform:scaleX(0.9569);">NOT FILED</span>
<div class="b inp" style="left:899px;top:383px;width:176px;height:22px"></div>
<div class="b btn" style="left:1075px;top:381px;width:30px;height:24px"></div>
<span class="t" style="left:1079.72px;top:384.70px;font-family:'Liberation Sans', Arial, sans-serif;font-size:13px;color:#000;transform:scaleX(0.9789);">GO</span>
<div class="b" style="left:3px;top:411px;width:1184px;height:97px;border:2px solid;border-color:#fff #808080 #808080 #fff;"></div>
<div class="b" style="left:5px;top:413px;width:1180px;height:93px;background:#22568a;border:1px solid;border-color:#909090 #fff #fff #909090;"></div>
<div class="b" style="left:6px;top:414px;width:747px;height:34px;border:1px solid #fff;"></div>
<div class="b btn" style="left:197px;top:419px;width:120px;height:23px"></div>
<span class="t" style="left:218.00px;top:423.00px;font-family:'Liberation Sans', Arial, sans-serif;font-size:13px;color:#000;transform:scaleX(1.0890);">Jump To Top</span>
<span class="t" style="left:321.80px;top:425.90px;font-family:'Liberation Sans', Arial, sans-serif;font-size:13px;color:#fff;font-weight:bold;transform:scaleX(1.0206);">Jump to Transaction:</span>
<div class="b inp" style="left:459px;top:421px;width:50px;height:22px"></div>
<div class="b btn" style="left:513px;top:419px;width:49px;height:23px"></div>
<span class="t" style="left:523.40px;top:423.00px;font-family:'Liberation Sans', Arial, sans-serif;font-size:13px;color:#000;transform:scaleX(0.9645);">Jump</span>
<span class="t" style="left:232.97px;top:457.20px;font-family:'Liberation Sans', Arial, sans-serif;font-size:13px;color:#fff;font-weight:bold;transform:scaleX(1.0270);">Filter Searches By: POD</span>
<div class="b inp" style="left:390px;top:452px;width:50px;height:22px"></div>
<span class="t" style="left:444.00px;top:457.20px;font-family:'Liberation Sans', Arial, sans-serif;font-size:13px;color:#fff;font-weight:bold;">POA</span>
<div class="b inp" style="left:476px;top:452px;width:50px;height:22px"></div>
<div class="b btn" style="left:251px;top:479px;width:95px;height:23px"></div>
<span class="t" style="left:265.87px;top:482.60px;font-family:'Liberation Sans', Arial, sans-serif;font-size:13px;color:#000;transform:scaleX(1.0317);">Clear Filter</span>
<div class="b btn" style="left:351px;top:479px;width:157px;height:23px"></div>
<span class="t" style="left:375.93px;top:482.60px;font-family:'Liberation Sans', Arial, sans-serif;font-size:13px;color:#000;transform:scaleX(1.0673);">Search From Top</span>
<span class="t" style="left:866.68px;top:434.80px;font-family:'Liberation Sans', Arial, sans-serif;font-size:13px;color:#fff;font-weight:bold;transform:scaleX(1.0245);">SEARCH</span>
<div class="b" style="left:866px;top:454px;width:150px;height:45px;border:1px solid #fff;"></div>
<div class="b btn" style="left:888px;top:457px;width:40px;height:23px"></div>
<span class="t" style="left:892.92px;top:461.50px;font-family:'Liberation Sans', Arial, sans-serif;font-size:13px;color:#000;transform:scaleX(0.5833);">1</span>
<span class="t" style="left:868.81px;top:482.50px;font-family:'Liberation Sans', Arial, sans-serif;font-size:12px;color:#fff;font-weight:bold;transform:scaleX(0.9857);">1638:1648</span>
<div class="b" style="left:899px;top:143px;width:176px;height:22px;background:#1661be;border:2px solid;border-color:#808080 #fff #fff #808080;box-shadow:inset 1px 1px 0 #404040, inset -1px -1px 0 #d4d0c8"></div>
<div class="b btn" style="left:1057px;top:145px;width:16px;height:18px"></div>
<svg class="b" style="left:1061px;top:152px;width:7px;height:4px" viewBox="0 0 7 4" shape-rendering="crispEdges"><path d="M0 0h7v1h-7zM1 1h5v1h-5zM2 2h3v1h-3zM3 3h1v1h-1z" fill="#000"/></svg>
<span class="t" style="left:903.12px;top:147.00px;font-family:'DejaVu Sans', Verdana, sans-serif;font-size:13px;color:#fff;letter-spacing:2.2px;transform:scaleX(1.1824);">---</span>
<span class="t" style="left:929.49px;top:147.00px;font-family:'DejaVu Sans', Verdana, sans-serif;font-size:13px;color:#fff;transform:scaleX(1.0104);">Choose One</span>
<span class="t" style="left:1012.54px;top:147.00px;font-family:'DejaVu Sans', Verdana, sans-serif;font-size:13px;color:#fff;letter-spacing:2.2px;transform:scaleX(1.1647);">---</span>
<div class="b btnd" style="left:1075px;top:141px;width:30px;height:24px"></div>
<span class="t" style="left:1079.72px;top:144.70px;font-family:'Liberation Sans', Arial, sans-serif;font-size:13px;color:#000;transform:scaleX(0.9789);">GO</span>
<div class="b" style="left:899px;top:165px;width:176px;height:450px;background:#1661be;border:1px solid #000;"></div>
<span class="t" style="left:901.25px;top:166.80px;font-family:'DejaVu Sans', Verdana, sans-serif;font-size:13px;color:#fff;letter-spacing:2.2px;transform:scaleX(1.1529);">---</span>
<span class="t" style="left:927.18px;top:166.80px;font-family:'DejaVu Sans', Verdana, sans-serif;font-size:13px;color:#fff;transform:scaleX(1.0156);">Choose One</span>
<span class="t" style="left:1010.92px;top:166.80px;font-family:'DejaVu Sans', Verdana, sans-serif;font-size:13px;color:#fff;letter-spacing:2.2px;transform:scaleX(1.1824);">---</span>
<span class="t" style="left:902.40px;top:182.80px;font-family:'DejaVu Sans', Verdana, sans-serif;font-size:13px;color:#fff;transform:scaleX(1.0097);">View Plan</span>
<span class="t" style="left:902.40px;top:198.80px;font-family:'DejaVu Sans', Verdana, sans-serif;font-size:13px;color:#fff;transform:scaleX(1.0122);">Rerun Inputs</span>
<span class="t" style="left:902.40px;top:214.80px;font-family:'DejaVu Sans', Verdana, sans-serif;font-size:13px;color:#fff;transform:scaleX(1.0333);">Rerun As Is</span>
<span class="t" style="left:902.40px;top:230.80px;font-family:'DejaVu Sans', Verdana, sans-serif;font-size:13px;color:#fff;transform:scaleX(1.0327);">Plot Plan</span>
<span class="t" style="left:902.40px;top:246.80px;font-family:'DejaVu Sans', Verdana, sans-serif;font-size:13px;color:#fff;transform:scaleX(1.0219);">Plot on Enroute Charts</span>
<span class="t" style="left:902.40px;top:262.80px;font-family:'DejaVu Sans', Verdana, sans-serif;font-size:13px;color:#fff;transform:scaleX(0.9708);">Download KML</span>
<span class="t" style="left:902.40px;top:278.80px;font-family:'DejaVu Sans', Verdana, sans-serif;font-size:13px;color:#fff;transform:scaleX(1.0105);">Get WXE</span>
<span class="t" style="left:902.40px;top:294.80px;font-family:'DejaVu Sans', Verdana, sans-serif;font-size:13px;color:#fff;transform:scaleX(0.9956);">Reformat Plan</span>
<span class="t" style="left:902.40px;top:310.80px;font-family:'DejaVu Sans', Verdana, sans-serif;font-size:13px;color:#fff;transform:scaleX(1.0468);">Save As Txt</span>
<span class="t" style="left:902.40px;top:326.80px;font-family:'DejaVu Sans', Verdana, sans-serif;font-size:13px;color:#fff;transform:scaleX(1.0198);">Save As PDF</span>
<span class="t" style="left:902.40px;top:342.80px;font-family:'DejaVu Sans', Verdana, sans-serif;font-size:13px;color:#fff;transform:scaleX(1.0114);">Download Route Pack</span>
<span class="t" style="left:902.40px;top:358.80px;font-family:'DejaVu Sans', Verdana, sans-serif;font-size:13px;color:#fff;transform:scaleX(1.0318);">View ICAO</span>
<span class="t" style="left:902.40px;top:374.80px;font-family:'DejaVu Sans', Verdana, sans-serif;font-size:13px;color:#fff;transform:scaleX(0.9892);">View DD 175</span>
<span class="t" style="left:902.40px;top:390.80px;font-family:'DejaVu Sans', Verdana, sans-serif;font-size:13px;color:#fff;transform:scaleX(0.9813);">View DD 1801</span>
<span class="t" style="left:902.40px;top:406.80px;font-family:'DejaVu Sans', Verdana, sans-serif;font-size:13px;color:#fff;transform:scaleX(1.0620);">ATC File</span>
<span class="t" style="left:902.40px;top:422.80px;font-family:'DejaVu Sans', Verdana, sans-serif;font-size:13px;color:#fff;transform:scaleX(1.0389);">Transmit Plan to:</span>
<span class="t" style="left:902.40px;top:438.80px;font-family:'DejaVu Sans', Verdana, sans-serif;font-size:13px;color:#fff;transform:scaleX(1.0486);">&gt; Arinc/Sita/Aftn</span>
<span class="t" style="left:902.40px;top:454.80px;font-family:'DejaVu Sans', Verdana, sans-serif;font-size:13px;color:#fff;">&gt; FAX</span>
<span class="t" style="left:902.40px;top:470.80px;font-family:'DejaVu Sans', Verdana, sans-serif;font-size:13px;color:#fff;transform:scaleX(0.9400);">&gt; Email</span>
<span class="t" style="left:902.40px;top:486.80px;font-family:'DejaVu Sans', Verdana, sans-serif;font-size:13px;color:#fff;transform:scaleX(0.9935);">Uplink Flt Plan</span>
<span class="t" style="left:902.40px;top:502.80px;font-family:'DejaVu Sans', Verdana, sans-serif;font-size:13px;color:#fff;transform:scaleX(0.9720);">Uplink via Arinc Dir</span>
<span class="t" style="left:902.40px;top:518.80px;font-family:'DejaVu Sans', Verdana, sans-serif;font-size:13px;color:#fff;transform:scaleX(0.9794);">Uplink via Satcom Dir</span>
<span class="t" style="left:902.40px;top:534.80px;font-family:'DejaVu Sans', Verdana, sans-serif;font-size:13px;color:#fff;transform:scaleX(1.0040);">eLoadsheet</span>
<span class="t" style="left:902.40px;top:550.80px;font-family:'DejaVu Sans', Verdana, sans-serif;font-size:13px;color:#fff;">Notify CB</span>
<span class="t" style="left:902.40px;top:566.80px;font-family:'DejaVu Sans', Verdana, sans-serif;font-size:13px;color:#fff;">Cancel CB</span>
<div class="b" style="left:900px;top:582px;width:174px;height:16px;background:#0a246a;border:1px dotted #e8e8e8"></div>
<span class="t" style="left:902.40px;top:582.80px;font-family:'DejaVu Sans', Verdana, sans-serif;font-size:13px;color:#fff;transform:scaleX(1.0206);">GPS RAIM Prediction</span>
<span class="t" style="left:902.40px;top:598.80px;font-family:'DejaVu Sans', Verdana, sans-serif;font-size:13px;color:#fff;transform:scaleX(1.0048);">CFMU Validation</span>
<div class="b ann" style="left:895px;top:575px;width:149px;height:28px"></div>
</body></html>
